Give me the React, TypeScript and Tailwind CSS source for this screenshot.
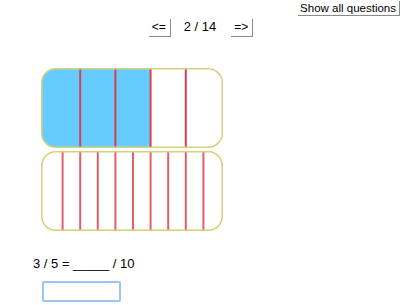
const FONT = { fontFamily: '"Liberation Sans", Arial, sans-serif' };

const BAR_W = 182;
const BAR_H = 80;
const INSET = 4;
const SPAN = 176;

function FractionBar({
  parts,
  filled,
  lineColor,
}: {
  parts: number;
  filled: number;
  lineColor: string;
}) {
  const step = SPAN / parts;
  const fillEnd = INSET + filled * step;
  const id = `clip-${parts}`;

  return (
    <svg width={BAR_W} height={BAR_H} viewBox={`0 0 ${BAR_W} ${BAR_H}`} className="block">
      <defs>
        <clipPath id={id}>
          <rect x={0.75} y={0.75} width={BAR_W - 1.5} height={BAR_H - 1.5} rx={14} />
        </clipPath>
      </defs>
      <g clipPath={`url(#${id})`}>
        {filled > 0 && <rect x={0} y={0} width={fillEnd} height={BAR_H} fill="#66ccff" />}
        {Array.from({ length: parts - 1 }, (_, i) => {
          const x = INSET + (i + 1) * step;
          return (
            <line key={i} x1={x} y1={0} x2={x} y2={BAR_H} stroke={lineColor} strokeWidth={2} />
          );
        })}
      </g>
      <rect
        x={0.75}
        y={0.75}
        width={BAR_W - 1.5}
        height={BAR_H - 1.5}
        rx={14}
        fill="none"
        stroke="#d6d07a"
        strokeWidth={1.5}
      />
    </svg>
  );
}

const navBtn =
  'h-[18px] w-[22px] whitespace-nowrap border-0 bg-white p-0 text-[12px] leading-[16px] shadow-[1px_1px_0_#8a8a8a]';

export default function App() {
  return (
    <div className="relative h-[305px] w-[400px] overflow-hidden bg-white text-black" style={FONT}>
      <div className="flex justify-end">
        <button className="mr-[1px] h-[15px] whitespace-nowrap border-0 bg-white px-[3px] py-0 text-[11.5px] leading-[14px] shadow-[1px_1px_0_#8a8a8a]">
          Show all questions
        </button>
      </div>

      <div className="mt-[2px] flex items-center justify-center gap-[14px]">
        <button className={navBtn}>&lt;=</button>
        <span className="whitespace-nowrap text-center text-[13px]">2 / 14</span>
        <button className={navBtn}>=&gt;</button>
      </div>

      <div className="ml-[41px] mt-[31px] flex flex-col gap-[3px]">
        <FractionBar parts={5} filled={3} lineColor="#dc3e4c" />
        <FractionBar parts={10} filled={0} lineColor="#e0606c" />
      </div>

      <p className="ml-[33px] mt-[25px] whitespace-nowrap text-[13px] leading-[15px]">
        3 / 5 = _____ / 10
      </p>

      <input
        className="ml-[42px] mt-[10px] block h-[21px] w-[79px] rounded-[2px] border-2 border-[#9cc6f2] outline-none"
        type="text"
      />
    </div>
  );
}
